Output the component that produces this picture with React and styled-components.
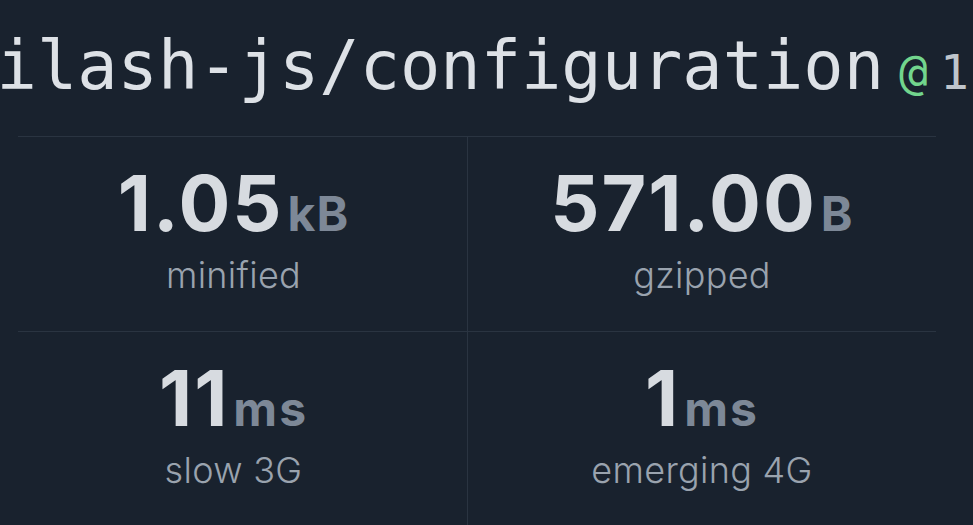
import React from 'react';
import styled, { createGlobalStyle } from 'styled-components';

const GlobalStyle = createGlobalStyle`
  html, body {
    margin: 0;
    padding: 0;
    background: #19222e;
  }
  body {
    font-family: Inter, "Noto Sans", sans-serif;
    overflow: hidden;
  }
`;

const Page = styled.div`
  width: 973px;
  height: 525px;
  overflow: hidden;
  background: #19222e;
`;

const TitleBar = styled.div`
  display: flex;
  justify-content: center;
  align-items: baseline;
  white-space: nowrap;
  padding: 33px 0 36px;
  height: 67px;
  overflow: hidden;
`;

const PackageName = styled.h1`
  margin: 0;
  font-family: "DejaVu Sans Mono", "Liberation Mono", monospace;
  font-weight: 400;
  font-size: 67px;
  line-height: 1;
  color: #dde1e6;
`;

const Version = styled.span`
  margin-left: 15px;
  padding-right: 13px;
  font-family: "DejaVu Sans Mono", "Liberation Mono", monospace;
  font-size: 48px;
  line-height: 1;
  color: #bfc5cc;
`;

const At = styled.span`
  color: #72d58d;
  margin-right: 12px;
`;

const StatsGrid = styled.div`
  display: grid;
  grid-template-columns: 468px 468px;
`;

const Divider = styled.div`
  grid-column: 1 / -1;
  height: 1px;
  margin-left: 18px;
  background: #2a3441;
`;

const Stat = styled.div`
  height: 194px;
  box-sizing: border-box;
  padding-top: 28px;
  display: flex;
  flex-direction: column;
  align-items: center;
  border-right: ${(p) => (p.$left ? '1px solid #2a3441' : 'none')};
`;

const Value = styled.div`
  display: flex;
  align-items: baseline;
  line-height: 1;
`;

const Number = styled.span`
  font-size: 77px;
  font-weight: 700;
  letter-spacing: 2px;
  color: #d7dbe0;
`;

const Unit = styled.span`
  margin-left: 4px;
  font-size: 48px;
  font-weight: 700;
  letter-spacing: ${(p) => (p.$wide ? '2px' : '1px')};
  color: #7d8897;
`;

const Label = styled.div`
  margin-top: 15px;
  font-size: 36px;
  font-weight: 300;
  letter-spacing: 0.3px;
  line-height: 1;
  color: #9aa3ae;
`;

const stats = [
  { value: '1.05', unit: 'kB', label: 'minified' },
  { value: '571.00', unit: 'B', label: 'gzipped' },
  { value: '11', unit: 'ms', label: 'slow 3G' },
  { value: '1', unit: 'ms', label: 'emerging 4G' },
];

export default function App() {
  return (
    <Page>
      <GlobalStyle />
      <TitleBar>
        <PackageName>@kailash-js/configuration</PackageName>
        <Version>
          <At>@</At>1.0.1
        </Version>
      </TitleBar>
      <StatsGrid>
        {stats.map((s, i) => (
          <React.Fragment key={s.label}>
            {i % 2 === 0 && <Divider />}
            <Stat $left={i % 2 === 0}>
              <Value>
                <Number>{s.value}</Number>
                <Unit $wide={s.unit === 'ms'}>{s.unit}</Unit>
              </Value>
              <Label>{s.label}</Label>
            </Stat>
          </React.Fragment>
        ))}
      </StatsGrid>
    </Page>
  );
}
